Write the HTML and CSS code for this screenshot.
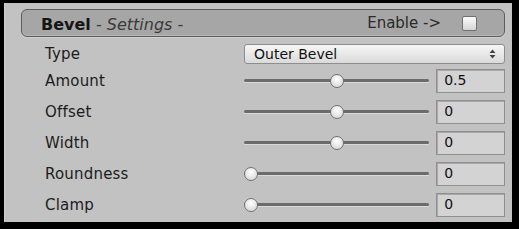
FILE: index.html
```html
<!DOCTYPE html>
<html lang="en">
<head>
  <meta charset="UTF-8">
  <title>Bevel Settings</title>
  <link rel="stylesheet" href="styles.css">
</head>
<body>
  <div class="panel">
    <!-- Header bar -->
    <div class="header">
      <div class="title"><b>Bevel</b> - <i>Settings</i> -</div>
      <div class="enable">Enable -&gt; <span class="checkbox"></span></div>
    </div>

    <div class="row type-row">
      <label>Type</label>
      <div class="dropdown">
        <span>Outer Bevel</span>
        <svg class="arrows" width="7" height="10" viewBox="0 0 7 10"><path d="M3.5 0.5 L6.5 4 H0.5 Z M3.5 9.5 L6.5 6 H0.5 Z" fill="#444"/></svg>
      </div>
    </div>

    <div class="row">
      <label>Amount</label>
      <div class="slider"><div class="track"></div><div class="thumb mid"></div></div>
      <div class="field">0.5</div>
    </div>
    <div class="row">
      <label>Offset</label>
      <div class="slider"><div class="track"></div><div class="thumb mid"></div></div>
      <div class="field">0</div>
    </div>
    <div class="row">
      <label>Width</label>
      <div class="slider"><div class="track"></div><div class="thumb mid"></div></div>
      <div class="field">0</div>
    </div>
    <div class="row">
      <label>Roundness</label>
      <div class="slider"><div class="track"></div><div class="thumb"></div></div>
      <div class="field">0</div>
    </div>
    <div class="row">
      <label>Clamp</label>
      <div class="slider"><div class="track"></div><div class="thumb"></div></div>
      <div class="field">0</div>
    </div>
  </div>
</body>
</html>
```

FILE: styles.css
```css
/* General styling */
body {
  margin: 0;
  background-color: #000;
  font-family: "DejaVu Sans", Verdana, sans-serif;
  color: #1c1c1c;
}
.panel {
  margin: 3px 7px 7px 4px;
  height: 219px;
  box-sizing: border-box;
  background-color: #c2c2c2;
  border-left: 1px solid #cdcdcd;
  padding: 6px 7px 0 16px;
}

/* Header */
.header {
  height: 28px;
  box-sizing: border-box;
  display: flex;
  align-items: center;
  justify-content: space-between;
  background-color: #a6a6a6;
  border: 1px solid #5c5c5c;
  border-radius: 6px;
  box-shadow: inset 0 -1px 0 #b8b8b8, 0 1px 0 #d0d0d0;
  padding: 2px 27px 0 19px;
}
.title {
  font-size: 16px;
  color: #3a3a3a;
}
.title b {
  color: #151515;
}
.title i {
  color: #3a3a3a;
}
.enable {
  display: flex;
  align-items: center;
  font-size: 15px;
  color: #2a2a2a;
  margin-top: -2px;
}
.checkbox {
  display: inline-block;
  width: 15px;
  height: 15px;
  box-sizing: border-box;
  margin-left: 21px;
  border: 1px solid #707070;
  border-radius: 2px;
  background: linear-gradient(#fbfbfb, #d4d4d4);
}

/* Rows */
.row {
  display: flex;
  align-items: center;
  height: 24px;
  margin-top: 7px;
  padding-left: 24px;
}
.row label {
  width: 199px;
  font-size: 15px;
  letter-spacing: 0.2px;
}
.type-row {
  margin-top: 5px;
  margin-bottom: -4px;
}
.dropdown {
  flex: 1;
  height: 20px;
  box-sizing: border-box;
  display: flex;
  align-items: center;
  justify-content: space-between;
  padding: 0 8px 0 9px;
  font-size: 14px;
  color: #111;
  border: 1px solid #8e8e8e;
  border-radius: 3px;
  background: linear-gradient(#f6f6f6, #dadada);
}
.slider {
  position: relative;
  width: 186px;
  height: 14px;
  margin-right: 7px;
}
.track {
  position: absolute;
  left: 0;
  right: 0;
  top: 5px;
  height: 3px;
  border-radius: 2px;
  background-color: #6b6b6b;
  box-shadow: 0 1px 0 #dadada;
}
.thumb {
  position: absolute;
  top: 0;
  left: 0;
  width: 14px;
  height: 14px;
  box-sizing: border-box;
  border: 1px solid #727272;
  border-radius: 50%;
  background: radial-gradient(circle at 50% 35%, #ffffff, #d0d0d0);
}
.thumb.mid {
  left: 50%;
  margin-left: -6px;
}
.field {
  width: 69px;
  height: 24px;
  box-sizing: border-box;
  border: 1px solid #8f8f8f;
  background-color: #d3d3d3;
  box-shadow: inset 1px 1px 0 #a8a8a8;
  font-size: 14px;
  line-height: 21px;
  padding-left: 7px;
  color: #111;
}
```
